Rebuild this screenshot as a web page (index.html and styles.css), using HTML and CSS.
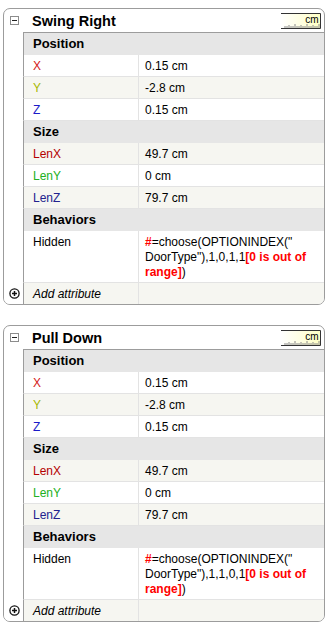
FILE: index.html
```html
<!DOCTYPE html>
<html>
<head>
<meta charset="utf-8">
<link rel="stylesheet" href="styles.css">
</head>
<body>
<div class="panel">
  <div class="phead">
    <svg class="toggle" width="9" height="9" viewBox="0 0 9 9"><rect x="0.5" y="0.5" width="8" height="8" fill="#fff" stroke="#8c8c8c"/><line x1="2" y1="4.5" x2="7" y2="4.5" stroke="#222"/></svg>
    <span class="title">Swing Right</span>
    <svg class="ruler" width="40" height="16" viewBox="0 0 40 16">
      <defs><linearGradient id="rg1" x1="0" x2="1" y1="0" y2="0"><stop offset="0" stop-color="#ffffff"/><stop offset="1" stop-color="#ffffc4"/></linearGradient></defs>
      <rect x="0" y="0.5" width="39.5" height="15" fill="url(#rg1)"/>
      <path d="M0 0.5H39.5V15.5H0" fill="none" stroke="#333"/>
      <path d="M4 15V13M6 15V13M8 15V12M10 15V13M12 15V13M14 15V11M16 15V13M18 15V13M20 15V12M22 15V13M24 15V13M26 15V11M28 15V13M30 15V13M32 15V12M34 15V13M36 15V13M38 15V11" stroke="#8a8a8a" stroke-width="1"/>
      <text x="37.5" y="9.5" text-anchor="end" class="cm">cm</text>
    </svg>
  </div>
  <div class="row"><div class="g"></div><div class="sec first">Position</div></div>
  <div class="row"><div class="g"></div><div class="k cx">X</div><div class="v">0.15 cm</div></div>
  <div class="row alt"><div class="g"></div><div class="k cy">Y</div><div class="v">-2.8 cm</div></div>
  <div class="row"><div class="g"></div><div class="k cz">Z</div><div class="v">0.15 cm</div></div>
  <div class="row"><div class="g"></div><div class="sec">Size</div></div>
  <div class="row alt"><div class="g"></div><div class="k lx">LenX</div><div class="v">49.7 cm</div></div>
  <div class="row"><div class="g"></div><div class="k ly">LenY</div><div class="v">0 cm</div></div>
  <div class="row alt"><div class="g"></div><div class="k lz">LenZ</div><div class="v">79.7 cm</div></div>
  <div class="row"><div class="g"></div><div class="sec">Behaviors</div></div>
  <div class="row"><div class="g"></div><div class="k">Hidden</div><div class="v"><b class="err">#</b>=choose(OPTIONINDEX("<wbr>DoorType"),1,0,1,1<b class="err">[0 is out of range]</b>)</div></div>
  <div class="row alt add"><div class="g"><svg width="11" height="11" viewBox="0 0 11 11"><circle cx="5.5" cy="5.5" r="4.6" fill="#fff" stroke="#111" stroke-width="1.3"/><path d="M3 5.5H8M5.5 3V8" stroke="#111" stroke-width="1.5"/></svg></div><div class="k">Add attribute</div><div class="v"></div></div>
</div>

<div class="panel">
  <div class="phead">
    <svg class="toggle" width="9" height="9" viewBox="0 0 9 9"><rect x="0.5" y="0.5" width="8" height="8" fill="#fff" stroke="#8c8c8c"/><line x1="2" y1="4.5" x2="7" y2="4.5" stroke="#222"/></svg>
    <span class="title">Pull Down</span>
    <svg class="ruler" width="40" height="16" viewBox="0 0 40 16">
      <defs><linearGradient id="rg2" x1="0" x2="1" y1="0" y2="0"><stop offset="0" stop-color="#ffffff"/><stop offset="1" stop-color="#ffffc4"/></linearGradient></defs>
      <rect x="0" y="0.5" width="39.5" height="15" fill="url(#rg2)"/>
      <path d="M0 0.5H39.5V15.5H0" fill="none" stroke="#333"/>
      <path d="M4 15V13M6 15V13M8 15V12M10 15V13M12 15V13M14 15V11M16 15V13M18 15V13M20 15V12M22 15V13M24 15V13M26 15V11M28 15V13M30 15V13M32 15V12M34 15V13M36 15V13M38 15V11" stroke="#8a8a8a" stroke-width="1"/>
      <text x="37.5" y="9.5" text-anchor="end" class="cm">cm</text>
    </svg>
  </div>
  <div class="row"><div class="g"></div><div class="sec first">Position</div></div>
  <div class="row"><div class="g"></div><div class="k cx">X</div><div class="v">0.15 cm</div></div>
  <div class="row alt"><div class="g"></div><div class="k cy">Y</div><div class="v">-2.8 cm</div></div>
  <div class="row"><div class="g"></div><div class="k cz">Z</div><div class="v">0.15 cm</div></div>
  <div class="row"><div class="g"></div><div class="sec">Size</div></div>
  <div class="row alt"><div class="g"></div><div class="k lx">LenX</div><div class="v">49.7 cm</div></div>
  <div class="row"><div class="g"></div><div class="k ly">LenY</div><div class="v">0 cm</div></div>
  <div class="row alt"><div class="g"></div><div class="k lz">LenZ</div><div class="v">79.7 cm</div></div>
  <div class="row"><div class="g"></div><div class="sec">Behaviors</div></div>
  <div class="row"><div class="g"></div><div class="k">Hidden</div><div class="v"><b class="err">#</b>=choose(OPTIONINDEX("<wbr>DoorType"),1,1,0,1<b class="err">[0 is out of range]</b>)</div></div>
  <div class="row alt add"><div class="g"><svg width="11" height="11" viewBox="0 0 11 11"><circle cx="5.5" cy="5.5" r="4.6" fill="#fff" stroke="#111" stroke-width="1.3"/><path d="M3 5.5H8M5.5 3V8" stroke="#111" stroke-width="1.5"/></svg></div><div class="k">Add attribute</div><div class="v"></div></div>
</div>
</body>
</html>
```
FILE: styles.css
```css
html, body {
  margin: 0;
  padding: 0;
  background: #fff;
}
body {
  padding-top: 8px;
  font-family: "Liberation Sans", Arial, sans-serif;
  font-size: 12px;
  color: #000;
}
.panel {
  margin-left: 3px;
  width: 322px;
  box-sizing: border-box;
  border: 1px solid #9c9c9c;
  border-radius: 7px;
  overflow: hidden;
  margin-bottom: 20px;
}
.phead {
  display: flex;
  align-items: center;
  height: 23px;
}
.toggle {
  margin-left: 6px;
  flex: none;
  display: block;
}
.title {
  margin-left: 13px;
  font-weight: bold;
  font-size: 14.5px;
  flex: 1;
  white-space: nowrap;
}
.ruler {
  display: block;
  margin-right: 3px;
  margin-top: 1px;
  flex: none;
}
.cm {
  font-family: "Liberation Sans", Arial, sans-serif;
  font-size: 10px;
  fill: #000;
}
.row {
  display: grid;
  grid-template-columns: 19px 116px 1fr;
}
.g {
  background: #fff;
  display: flex;
  align-items: center;
  justify-content: center;
}
.g svg { display: block; margin-left: 1px; }
.sec {
  grid-column: 2 / 4;
  border-left: 1px solid #9c9c9c;
  background: #e6e6e6;
  height: 22px;
  line-height: 22px;
  padding-left: 9px;
  font-weight: bold;
  font-size: 13px;
}
.sec.first {
  border-top: 1px solid #9c9c9c;
}
.k, .v {
  line-height: 15px;
  padding-top: 4px;
  padding-bottom: 2px;
  border-bottom: 1px solid #e3e3e3;
  background: #fff;
}
.k {
  border-left: 1px solid #9c9c9c;
  border-right: 1px solid #e3e3e3;
  padding-left: 9px;
}
.v {
  padding-left: 6px;
  padding-right: 6px;
}
.alt .k, .alt .v {
  background: #f6f6f1;
}
.add .k, .add .v {
  border-bottom: none;
}
.add .k {
  font-style: italic;
}
.err {
  color: #ff0000;
  font-weight: bold;
}
.cx { color: #d42020; }
.cy { color: #a6b800; }
.cz { color: #1a1ac8; }
.lx { color: #b40000; }
.ly { color: #22b022; }
.lz { color: #22228e; }
```
